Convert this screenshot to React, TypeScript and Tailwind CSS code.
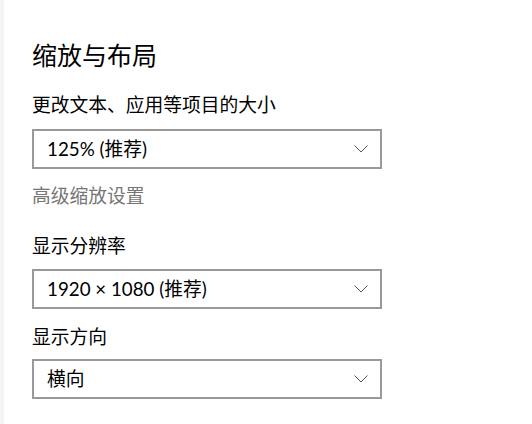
import React from 'react';

const font = { fontFamily: '"Noto Sans", "Noto Sans CJK SC", sans-serif' };

const Chevron: React.FC = () => (
  <svg width="14" height="8" viewBox="0 0 14 8" fill="none" className="shrink-0">
    <path d="M0.5 0.5 L7 7 L13.5 0.5" stroke="#444" strokeWidth="0.9" />
  </svg>
);

const Select: React.FC<{ value: string; className?: string }> = ({ value, className }) => (
  <div
    className={`w-[350px] h-[40px] border-2 border-[#999999] bg-white flex items-center justify-between pl-[13px] pr-[12px] ${className ?? ''}`}
  >
    <span className="text-[18.75px] leading-[26px] text-black font-['Lato','Noto_Sans_CJK_SC',sans-serif]">
      {value}
    </span>
    <Chevron />
  </div>
);

const App: React.FC = () => {
  return (
    <div className="w-[532px] h-[424px] bg-white flex overflow-hidden" style={font}>
      {/* left edge */}
      <div className="w-[4px] bg-[#f3f3f3]" />
      <div className="flex flex-col pl-[28px] pt-[39px]">
        <h1 className="text-[25px] leading-[32px] text-black">缩放与布局</h1>

        <div className="mt-[21px] text-[18.75px] leading-[26px] text-black">更改文本、应用等项目的大小</div>
        <Select value="125% (推荐)" className="mt-[11px]" />

        <div className="mt-[14px] text-[18.75px] leading-[26px] text-[#767676]">高级缩放设置</div>

        <div className="mt-[24px] text-[18.75px] leading-[26px] text-black">显示分辨率</div>
        <Select value="1920 × 1080 (推荐)" className="mt-[10px]" />

        <div className="mt-[15px] text-[18.75px] leading-[26px] text-black">显示方向</div>
        <Select value="横向" className="mt-[9px]" />
      </div>
    </div>
  );
};

export default App;
